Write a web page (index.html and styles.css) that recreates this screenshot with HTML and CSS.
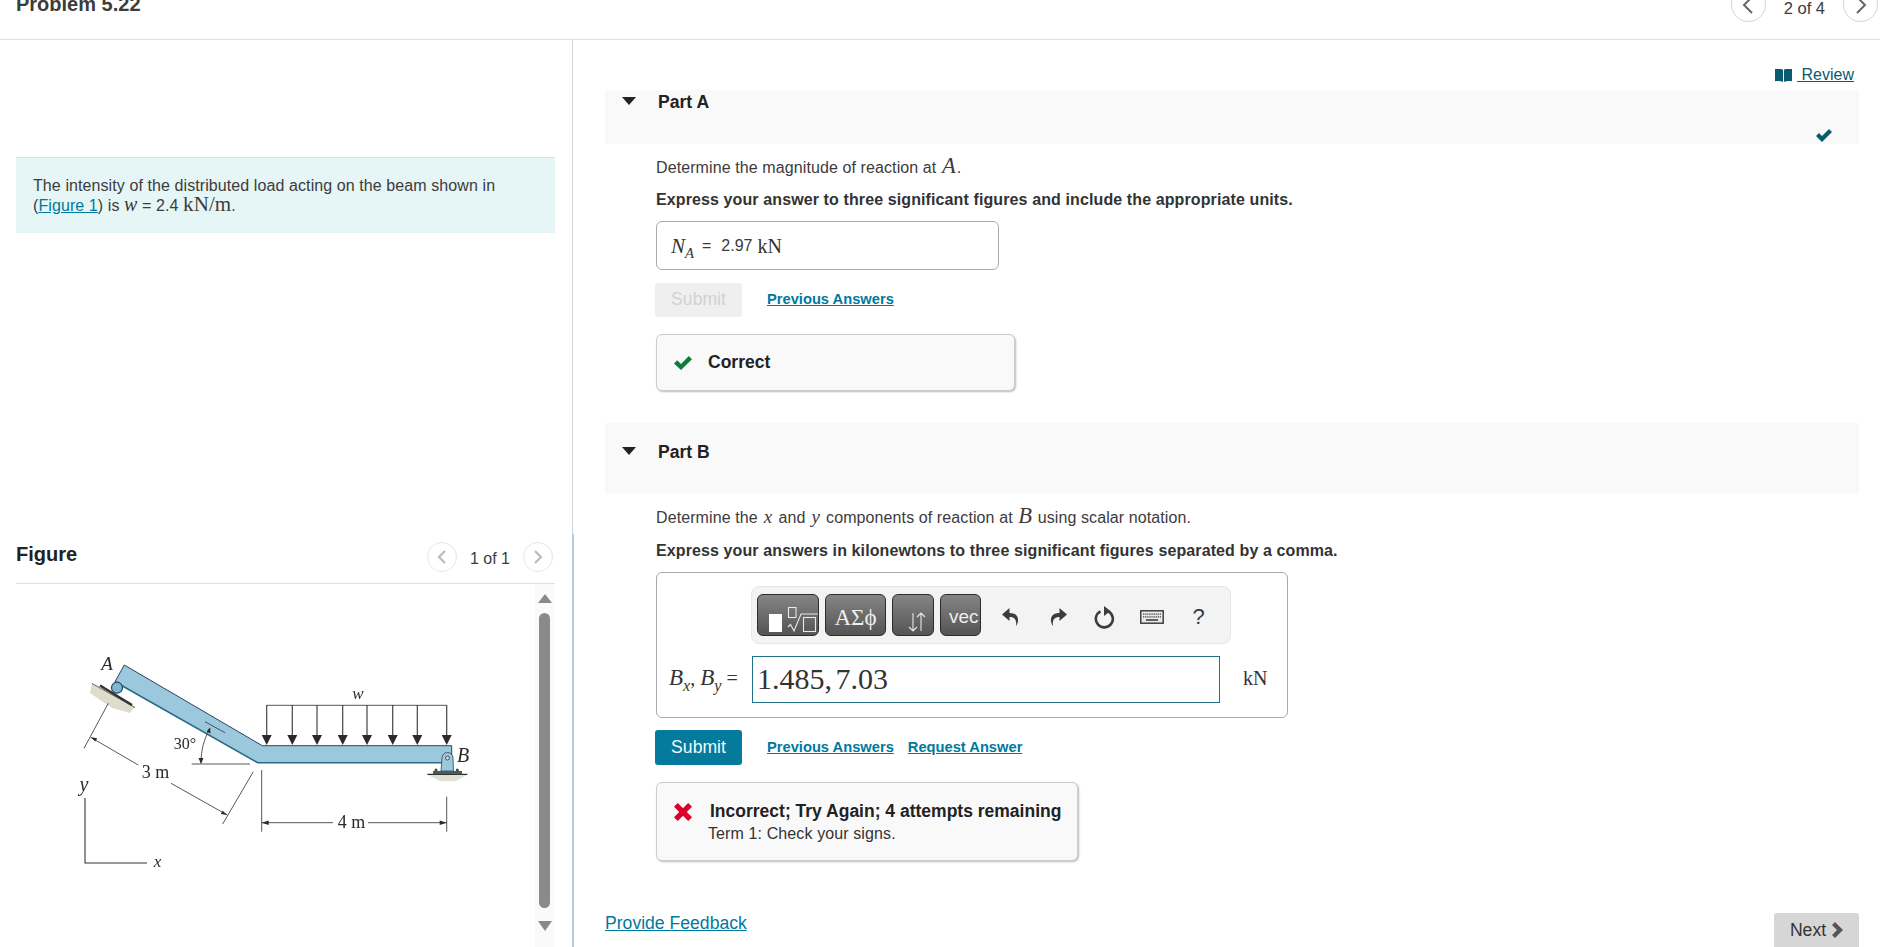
FILE: index.html
```html
<!DOCTYPE html>
<html lang="en">
<head>
<meta charset="utf-8">
<title>Problem 5.22</title>
<link rel="stylesheet" href="styles.css">
</head>
<body>
<header class="topbar">
  <h1 class="title">Problem 5.22</h1>
  <nav class="top-pager">
    <span class="circle"><svg width="12" height="20" viewBox="0 0 12 20"><path d="M10 2 2 10l8 8" class="chev"/></svg></span>
    <span class="pager-text">2 of 4</span>
    <span class="circle"><svg width="12" height="20" viewBox="0 0 12 20"><path d="M2 2l8 8-8 8" class="chev"/></svg></span>
  </nav>
</header>
<main class="layout">
  <aside class="left">
    <div class="intro">The intensity of the distributed load acting on the beam shown in<br>(<a href="#">Figure 1</a>) is <i class="m">w</i> = 2.4 <span class="mu">kN/m</span>.</div>
    <div class="fig-head">
      <h2 class="fig-title">Figure</h2>
      <div class="fig-pager">
        <span class="circle small"><svg width="10" height="16" viewBox="0 0 10 16"><path d="M8 2 2 8l6 6" class="chev dis"/></svg></span>
        <span class="fig-count">1 of 1</span>
        <span class="circle small"><svg width="10" height="16" viewBox="0 0 10 16"><path d="M2 2l6 6-6 6" class="chev dis"/></svg></span>
      </div>
    </div>
    <div class="fig-body">
      <svg class="diagram" width="519" height="363" viewBox="16 584 519 363">
        <polygon points="92,683 135,707 130,713 112,708 90,693" fill="#dedccb"/>
        <line x1="92" y1="683.500" x2="135" y2="707.500" stroke="#666" stroke-width="1"/>
        <line x1="100" y1="685.500" x2="132" y2="705" stroke="#333" stroke-width="2.500"/>
        <polygon points="124.300,665 115,681.700 257.700,762.700 451.700,762.700 451.700,745.700 262.300,745.700" fill="#9cc8de"/>
        <polyline points="115,681.700 257.700,762.700 451.700,762.700" fill="none" stroke="#2a6a85" stroke-width="1.600"/>
        <polyline points="115,681.700 124.300,665 262.300,745.700 451.700,745.700 451.700,762.700" fill="none" stroke="#24475a" stroke-width="1"/>
        <circle cx="117" cy="687.700" r="5.500" fill="#7fb6d2" stroke="#24475a" stroke-width="1.200"/>
        <polygon points="428,775 467,775 456,781 440,781" fill="#e2e0d0"/>
        <path d="M441 771 442 758a5.500 5.500 0 0 1 11 0L453.500 771z" fill="#9cc8de" stroke="#24475a" stroke-width=".8"/>
        <circle cx="447.500" cy="758" r="2" fill="#ddd" stroke="#333" stroke-width=".8"/>
        <line x1="427.300" y1="774.300" x2="467.300" y2="774.300" stroke="#333" stroke-width="1.200"/>
        <rect x="433" y="771" width="29" height="3" fill="#4a5a60"/>
        <circle cx="436" cy="770" r="1.500" fill="#444"/>
        <circle cx="457.300" cy="770" r="1.500" fill="#444"/>
        <g stroke="#444" stroke-width=".9" fill="none">
          <path d="M266.700 705.300H446.700"/>
          <path d="M266.700 705V738M292.300 705V738M317 705V738M342.700 705V738M367 705V738M392.700 705V738M417.300 705V738M446.700 705V738" stroke-width="1.200"/>
          <path d="M108.300 703.300 84 748.300M90.700 737.300 138.300 765M171 783.300 227.300 815M253.300 771.700 222.700 824"/>
          <path d="M191.700 764H250M201 763C201 750 204 739 210 728.300M205 721.700 225 732.700"/>
          <path d="M261.700 770V831.700M446.700 796.700V831.700M261.700 822.700H333M368 822.700H446.700"/>
          <path d="M85 798V863H147" stroke="#333" stroke-width="1.100"/>
        </g>
        <g fill="#2a2a2a">
          <path d="M261.700 735h10l-5 10zM287.300 735h10l-5 10zM312 735h10l-5 10zM337.700 735h10l-5 10zM362 735h10l-5 10zM387.700 735h10l-5 10zM412.300 735h10l-5 10zM441.700 735h10l-5 10z"/>
          <path d="M90.700 737.300l6.500 1-1.800 3.200zM227.300 815l-6.500-1 1.800-3.200zM261.700 822.700l7-2.200v4.400zM446.700 822.700l-7-2.200v4.400zM201 764l-2.500-6h5zM210 727.500l.6 6-4-2z"/>
        </g>
        <g class="lbl">
          <text x="107" y="670" class="it a" text-anchor="middle">A</text>
          <text x="358" y="699" class="it sm" text-anchor="middle">w</text>
          <text x="185" y="749" class="deg" text-anchor="middle">30°</text>
          <text x="155.500" y="778" text-anchor="middle">3 m</text>
          <text x="84" y="791" class="it" text-anchor="middle">y</text>
          <text x="157.500" y="867" class="it sm" text-anchor="middle">x</text>
          <text x="351.500" y="828" text-anchor="middle">4 m</text>
          <text x="463" y="762" class="it" text-anchor="middle">B</text>
        </g>
      </svg>
      <div class="scrollbar">
        <span class="arrow-up"></span>
        <span class="thumb"></span>
        <span class="arrow-down"></span>
      </div>
    </div>
  </aside>
  <section class="right">
    <div class="review-row">
      <svg class="book" width="17" height="13" viewBox="0 0 17 13"><path d="M0 0c3-.6 6-.4 8 .8V13c-2-1-5-1.200-8-.8zM17 0c-3-.6-6-.4-8 .8V13c2-1 5-1.200 8-.8z" fill="#0b5a6e"/></svg>
      <a class="review" href="#">&nbsp;Review</a>
    </div>
    <div class="part-head part-a">
      <span class="tri"></span>
      <h3 class="part-title">Part A</h3>
      <svg class="part-check" width="17" height="13" viewBox="0 0 17 13"><path d="M1 7l3-3 3 3 7-7 3 3L7 13z" fill="#0b5a6e"/></svg>
    </div>
    <div class="part-body">
      <p class="q">Determine the magnitude of reaction at <i class="mb">A</i>.</p>
      <p class="ins">Express your answer to three significant figures and include the appropriate units.</p>
      <div class="ans-static"><i class="mv">N<sub>A</sub></i><span class="eq">=</span><span class="num">2.97</span><span class="unit">kN</span></div>
      <div class="actions">
        <button class="btn off" type="button">Submit</button>
        <a class="act" href="#">Previous Answers</a>
      </div>
      <div class="feedback ok">
        <svg width="18" height="14" viewBox="0 0 18 14"><path d="M0 7.500l3.200-3.200L7 8l7.800-8L18 3.200 7 14z" fill="#0e7c3a"/></svg>
        <strong class="fb-title">Correct</strong>
      </div>
    </div>
    <div class="part-head part-b">
      <span class="tri"></span>
      <h3 class="part-title">Part B</h3>
    </div>
    <div class="part-body">
      <p class="q">Determine the <i class="ms">x</i> and <i class="ms">y</i> components of reaction at <i class="mb">B</i> using scalar notation.</p>
      <p class="ins ins-b">Express your answers in kilonewtons to three significant figures separated by a comma.</p>
      <div class="ans-edit">
        <div class="toolbar">
          <span class="tb wide">
            <svg width="60" height="40" viewBox="0 0 60 40"><rect x="11" y="19" width="13" height="18" fill="#fff"/><g fill="none" stroke="#e8e8e8" stroke-width="1.100"><rect x="30.500" y="12.500" width="7.500" height="10"/><path d="M30 32l2.500-2.500 3.500 6.500 7-17h17"/><rect x="45.500" y="22.500" width="12" height="14"/></g></svg>
          </span>
          <span class="tb greek">ΑΣϕ</span>
          <span class="tb narrow"><svg width="40" height="40" viewBox="0 0 40 40"><g fill="none" stroke="#e8e8e8" stroke-width="1.100"><path d="M20 18v18M16 32l4 4 4-4"/><path d="M28 36V18M24 22l4-4 4 4"/></g></svg></span>
          <span class="tb vec">vec</span>
          <div class="tools">
            <span class="ti"><svg width="18" height="18" viewBox="0 0 18 18"><path d="M7.500 0 0 6.500 7.500 13V9C12 9 15 11 14 18c3-4 4-13-6.500-13z" fill="#3c3c3c"/></svg></span>
            <span class="ti"><svg width="18" height="18" viewBox="0 0 18 18"><path d="M10.500 0 18 6.500 10.500 13V9C6 9 3 11 4 18 1 14 0 5 10.500 5z" fill="#3c3c3c"/></svg></span>
            <span class="ti"><svg width="22" height="23" viewBox="0 0 22 23"><path d="M13.500 5A8.500 8.500 0 1 1 6.500 5.300" fill="none" stroke="#3c3c3c" stroke-width="2.600"/><path d="M10 0v10l6.500-5z" fill="#3c3c3c"/></svg></span>
            <span class="ti"><svg width="24" height="14" viewBox="0 0 24 14"><rect x=".8" y=".8" width="22.400" height="12.400" fill="#e8e8e8" stroke="#333" stroke-width="1.400"/><path d="M3 4.200h18M3 6.800h18" stroke="#444" stroke-width="1.300" stroke-dasharray="1.300 .8"/><path d="M6 10h12" stroke="#333" stroke-width="1.500"/></svg></span>
            <span class="ti help">?</span>
          </div>
        </div>
        <div class="ans-row">
          <span class="ans-label"><i class="lv">B<sub>x</sub></i>, <i class="lv">B<sub>y</sub></i> =</span>
          <div class="ans-input">1.485, 7.03</div>
          <span class="ans-unit">kN</span>
        </div>
      </div>
      <div class="actions second">
        <button class="btn on" type="button">Submit</button>
        <a class="act" href="#">Previous Answers</a>
        <a class="act" href="#">Request Answer</a>
      </div>
      <div class="feedback bad">
        <svg width="18" height="18" viewBox="0 0 18 18"><path d="M3.800 0 9 5.200 14.200 0 18 3.800 12.800 9 18 14.200 14.200 18 9 12.800 3.800 18 0 14.200 5.200 9 0 3.800z" fill="#d8002a"/></svg>
        <div class="fb-text">
          <strong class="fb-title">Incorrect; Try Again; 4 attempts remaining</strong>
          <div class="fb-note">Term 1: Check your signs.</div>
        </div>
      </div>
    </div>
    <footer class="foot">
      <a class="feedback-link" href="#">Provide Feedback</a>
      <button class="next" type="button">Next <svg width="11" height="16" viewBox="0 0 11 16"><path d="M3 0l8 8-8 8-3-3 5-5-5-5z" fill="#555"/></svg></button>
    </footer>
  </section>
</main>
</body>
</html>
```
FILE: styles.css
```css
* { box-sizing: border-box; }
html, body { margin: 0; padding: 0; height: 947px; overflow: hidden; background: #fff; }
body { font-family: "Liberation Sans", Arial, sans-serif; font-size: 16px; line-height: 20px; color: #3c3c3c; }
a { color: #00799e; }
p, h1, h2, h3 { margin: 0; }

.topbar { height: 40px; border-bottom: 1px solid #e0e0e0; display: flex; justify-content: space-between; align-items: flex-start; padding: 0 2px 0 16px; }
.title { font-size: 20px; line-height: 24px; margin-top: -8px; font-weight: 700; color: #3c3c3c; }
.top-pager { display: flex; align-items: center; margin-top: -13px; gap: 18px; }
.pager-text { margin-top: 6px; font-size: 16.500px; }
.circle { width: 35px; height: 35px; border: 1px solid #d5d5d5; border-radius: 50%; display: flex; align-items: center; justify-content: center; background: #fff; }
.circle.small { width: 30px; height: 30px; border-color: #e6e6e6; }
.chev { fill: none; stroke: #666; stroke-width: 2; }
.chev.dis { stroke: #bbb; stroke-width: 2.200; }

.layout { display: flex; height: 907px; }
.left { width: 573px; flex: none; border-right: 1px solid #ccd6dc; padding: 0 17px 0 16px; position: relative; }
.left::after { content: ""; position: absolute; right: -2px; top: 494px; bottom: 0; width: 2px; background: #bccad5; }
.intro { margin-top: 117px; height: 76px; background: #e6f5f6; border-top: 1px solid #dde3e3; padding: 18px 17px 0; letter-spacing: .09px; line-height: 19.500px; }
.m { font-family: "Liberation Serif", serif; font-size: 20px; line-height: 0; }
.mu { font-family: "Liberation Serif", serif; font-size: 21px; line-height: 0; }
.fig-head { margin-top: 309px; height: 42px; border-bottom: 1px solid #dfdfdf; display: flex; justify-content: space-between; align-items: flex-start; }
.fig-title { font-size: 20px; line-height: 24px; font-weight: 700; color: #222; }
.fig-pager { display: flex; align-items: center; gap: 13px; margin-right: 2px; }
.fig-count { font-size: 16px; margin-top: 3px; }
.fig-body { display: flex; height: 364px; }
.diagram { display: block; flex: none; filter: blur(.35px); }
.lbl text { font-family: "Liberation Serif", serif; font-size: 18px; fill: #2a2a2a; }
.lbl .it { font-style: italic; font-size: 20px; }
.lbl .a { font-size: 19px; }
.lbl .sm { font-size: 17px; }
.lbl .deg { font-size: 16px; }
.scrollbar { width: 19px; background: #fafafa; display: flex; flex-direction: column; align-items: center; padding-top: 10px; }
.arrow-up { width: 0; height: 0; border: 7px solid transparent; border-top: 0; border-bottom: 9px solid #8a8a8a; }
.thumb { width: 11px; height: 295px; border-radius: 6px; background: #8a8a8a; margin: 10px 0 13px; }
.arrow-down { width: 0; height: 0; border: 7px solid transparent; border-bottom: 0; border-top: 10px solid #8a8a8a; }

.right { flex: 1; padding: 0 21px 0 32px; min-width: 0; }
.review-row { height: 50px; display: flex; justify-content: flex-end; align-items: flex-start; padding: 28px 5px 0 0; }
.book { margin: 1px 5px 0 0; }
.review { color: #0b5a6e; line-height: 20px; margin-top: -3px; }
.part-head { background: #f9f9f9; display: flex; align-items: flex-start; }
.part-a { height: 54px; padding: 0 27px 2px 17px; }
.part-b { height: 71px; margin-top: 32px; padding: 18px 27px 0 17px; }
.tri { width: 0; height: 0; border: 7px solid transparent; border-bottom: 0; border-top: 8px solid #222; margin-top: 6px; flex: none; }
.part-a .tri { margin-top: 7px; }
.part-title { font-size: 17.600px; line-height: 20px; font-weight: 700; color: #222; margin: 1px 0 0 22px; }
.part-a .part-title { margin-top: 2px; }
.part-check { margin-left: auto; align-self: flex-end; }
.part-body { padding-left: 51px; }
.q { margin-top: 14px; height: 20px; letter-spacing: .1px; }
.mb { font-family: "Liberation Serif", serif; font-size: 22.500px; line-height: 0; margin: 0 1px; }
.ms { font-family: "Liberation Serif", serif; font-size: 19px; line-height: 0; margin: 0 1.500px; }
.ins { margin-top: 12px; font-weight: 700; color: #333; letter-spacing: .11px; }
.ins-b { margin-top: 13px; }
.ans-static { margin-top: 11px; width: 343px; height: 49px; border: 1px solid #aaa; border-radius: 6px; display: flex; align-items: center; padding-left: 14px; }
.mv { font-family: "Liberation Serif", serif; font-size: 21px; color: #333; }
.mv sub, .lv sub { font-size: 70%; line-height: 0; }
.eq { margin-left: 8px; }
.num { margin-left: 10px; }
.unit { font-family: "Liberation Serif", serif; font-size: 20px; margin-left: 5px; color: #333; }
.actions { margin-top: 13px; display: flex; align-items: center; gap: 15px; }
.actions.second { margin-top: 12px; }
.btn { width: 87px; height: 34px; border: 0; border-radius: 3px; font: 17.600px/20px "Liberation Sans", Arial, sans-serif; margin: 0 10px 0 -1px; padding: 0 0 2px; }
.btn.off { background: #efefef; color: #d2d2d2; }
.btn.on { background: #047a9c; color: #f2fafc; height: 35px; }
.act { font-size: 14.700px; font-weight: 700; margin-bottom: 2px; }
.act + .act { margin-left: -1px; }
.feedback { margin-top: 17px; background: #f9f9f9; border: 1px solid #ccc; border-radius: 6px; box-shadow: 1px 1px 2px #bbb; display: flex; }
.ok { width: 359px; height: 57px; align-items: center; padding-left: 17px; gap: 16px; }
.ok .fb-title { margin-bottom: 2px; }
.bad { width: 422px; height: 79px; padding: 18px 0 0 17px; gap: 18px; }
.bad svg { margin-top: 2px; flex: none; }
.fb-title { font-size: 17.500px; color: #222; display: block; }
.fb-note { margin: 3px 0 0 -2px; letter-spacing: .11px; color: #333; }
.ans-edit { margin-top: 11px; width: 632px; height: 146px; border: 1px solid #aaa; border-radius: 6px; padding: 13px 0 0 12px; }
.toolbar { margin-left: 82px; width: 480px; height: 58px; background: #f3f3f3; border: 1px solid #e6e6e6; border-radius: 8px; display: flex; align-items: center; padding-left: 5px; gap: 6px; }
.tb { height: 42px; border: 1px solid #2c2c2c; border-radius: 6px; background: linear-gradient(#858585, #545454); color: #eee; display: flex; align-items: center; justify-content: center; flex: none; }
.wide { width: 62px; }
.greek { width: 61px; font: 23px/1 "Liberation Serif", serif; padding-top: 4px; }
.narrow { width: 42px; }
.vec { width: 41px; font-size: 19px; padding: 4px 0 0 8px; justify-content: flex-start; overflow: hidden; }
.tools { display: flex; margin-top: 4px; }
.ti { width: 47px; display: flex; justify-content: center; align-items: center; flex: none; }
.help { font-size: 22px; color: #3c3c3c; }
.ans-row { display: flex; align-items: center; margin-top: 12px; }
.ans-label { width: 83px; font-family: "Liberation Serif", serif; font-size: 20px; color: #333; white-space: nowrap; margin-bottom: 3px; }
.lv { font-size: 23px; }
.ans-input { width: 468px; height: 47px; border: 1px solid #1e7186; padding-left: 4px; font: 30px/43px "Liberation Serif", serif; color: #333; word-spacing: -4px; }
.ans-unit { margin: 0 0 3px 23px; font: 20px/1 "Liberation Serif", serif; color: #333; }
.foot { margin-top: 52px; display: flex; justify-content: space-between; align-items: flex-start; }
.feedback-link { font-size: 17.600px; }
.next { width: 85px; height: 40px; border: 0; border-radius: 3px; background: #d6d6d6; color: #333; font: 17.600px/20px "Liberation Sans", Arial, sans-serif; padding: 0 0 6px; display: flex; align-items: center; justify-content: center; gap: 6px; }
```
